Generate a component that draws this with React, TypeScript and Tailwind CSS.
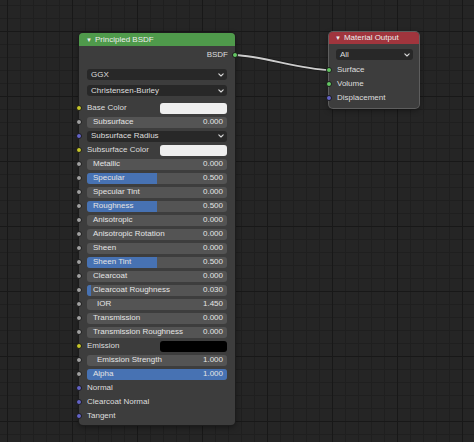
import React from "react";

type Row =
  | { kind: "color"; label: string; socket: string; swatch: string }
  | { kind: "slider"; label: string; socket: string; value: string; fill: number; indent?: boolean }
  | { kind: "dropdown"; label: string; socket: string }
  | { kind: "plain"; label: string; socket: string };

const YEL = "#c7c729";
const GRY = "#a1a1a1";
const PUR = "#6363c7";
const GRN = "#63c763";

const rows: Row[] = [
  { kind: "color", label: "Base Color", socket: YEL, swatch: "#efefef" },
  { kind: "slider", label: "Subsurface", socket: GRY, value: "0.000", fill: 0 },
  { kind: "dropdown", label: "Subsurface Radius", socket: PUR },
  { kind: "color", label: "Subsurface Color", socket: YEL, swatch: "#efefef" },
  { kind: "slider", label: "Metallic", socket: GRY, value: "0.000", fill: 0 },
  { kind: "slider", label: "Specular", socket: GRY, value: "0.500", fill: 0.5 },
  { kind: "slider", label: "Specular Tint", socket: GRY, value: "0.000", fill: 0 },
  { kind: "slider", label: "Roughness", socket: GRY, value: "0.500", fill: 0.5 },
  { kind: "slider", label: "Anisotropic", socket: GRY, value: "0.000", fill: 0 },
  { kind: "slider", label: "Anisotropic Rotation", socket: GRY, value: "0.000", fill: 0 },
  { kind: "slider", label: "Sheen", socket: GRY, value: "0.000", fill: 0 },
  { kind: "slider", label: "Sheen Tint", socket: GRY, value: "0.500", fill: 0.5 },
  { kind: "slider", label: "Clearcoat", socket: GRY, value: "0.000", fill: 0 },
  { kind: "slider", label: "Clearcoat Roughness", socket: GRY, value: "0.030", fill: 0.03 },
  { kind: "slider", label: "IOR", socket: GRY, value: "1.450", fill: 0, indent: true },
  { kind: "slider", label: "Transmission", socket: GRY, value: "0.000", fill: 0 },
  { kind: "slider", label: "Transmission Roughness", socket: GRY, value: "0.000", fill: 0 },
  { kind: "color", label: "Emission", socket: YEL, swatch: "#000000" },
  { kind: "slider", label: "Emission Strength", socket: GRY, value: "1.000", fill: 0, indent: true },
  { kind: "slider", label: "Alpha", socket: GRY, value: "1.000", fill: 1 },
  { kind: "plain", label: "Normal", socket: PUR },
  { kind: "plain", label: "Clearcoat Normal", socket: PUR },
  { kind: "plain", label: "Tangent", socket: PUR },
];

function Socket({ color, side }: { color: string; side: "left" | "right" }) {
  return (
    <span
      className={
        "absolute top-1/2 -translate-y-1/2 w-[6px] h-[6px] rounded-full border border-[#1a1a1a] " +
        (side === "left" ? "left-[-3px]" : "right-[-3px]")
      }
      style={{ backgroundColor: color }}
    />
  );
}

function Chevron() {
  return (
    <svg width="6" height="4" viewBox="0 0 6 4" className="shrink-0">
      <path d="M0.8 0.8 L3 3 L5.2 0.8" fill="none" stroke="#d8d8d8" strokeWidth="1.1" strokeLinecap="round" strokeLinejoin="round" />
    </svg>
  );
}

function Dropdown({ label, className = "" }: { label: string; className?: string }) {
  return (
    <div className={"h-[11px] rounded-[3px] bg-[#282828] flex items-center justify-between pl-[4px] pr-[3px] text-[#dedede] " + className}>
      <span>{label}</span>
      <Chevron />
    </div>
  );
}

function RowView({ row }: { row: Row }) {
  return (
    <div className="relative h-[14px] flex items-center">
      <Socket color={row.socket} side="left" />
      {row.kind === "plain" && <span className="ml-[8px] text-[#dedede]">{row.label}</span>}
      {row.kind === "color" && (
        <div className="ml-[8px] w-[140px] flex items-center justify-between">
          <span className="text-[#dedede]">{row.label}</span>
          <div className="w-[67px] h-[11px] rounded-[3px]" style={{ backgroundColor: row.swatch }} />
        </div>
      )}
      {row.kind === "dropdown" && <Dropdown label={row.label} className="ml-[8px] w-[140px]" />}
      {row.kind === "slider" && (
        <div className="relative ml-[8px] w-[140px] h-[11px] rounded-[3px] bg-[#545454] overflow-hidden">
          {row.fill > 0 && (
            <div className="absolute left-0 top-0 bottom-0 bg-[#4772b3]" style={{ width: `${row.fill * 100}%` }} />
          )}
          <div
            className={
              "relative h-full flex items-center justify-between pr-[4px] text-[#e4e4e4] " +
              (row.indent ? "pl-[10px]" : "pl-[6px]")
            }
          >
            <span>{row.label}</span>
            <span>{row.value}</span>
          </div>
        </div>
      )}
    </div>
  );
}

export default function App() {
  return (
    <div
      className="relative w-[474px] h-[442px] overflow-hidden bg-[#252525] font-['Liberation_Sans',Arial,sans-serif] text-[8px] leading-none [background-image:linear-gradient(to_right,#181818_1px,transparent_1px),linear-gradient(to_bottom,#181818_1px,transparent_1px),linear-gradient(to_right,#1f1f1f_1px,transparent_1px),linear-gradient(to_bottom,#1f1f1f_1px,transparent_1px)] [background-size:65px_65px,65px_65px,13px_13px,13px_13px] [background-position:7px_31px,7px_31px,7px_5px,7px_5px]"
    >
      {/* link */}
      <svg className="absolute left-0 top-0" width="474" height="442">
        <path d="M235 55 C 262 56, 300 69, 329 70" fill="none" stroke="#1a1a1a" strokeWidth="3.5" />
        <path d="M235 55 C 262 56, 300 69, 329 70" fill="none" stroke="#cdcdcd" strokeWidth="1.8" />
      </svg>

      {/* Principled BSDF node */}
      <div className="absolute left-[79px] top-[33px] w-[156px] h-[392px] rounded-[4px] bg-[#3d3d3d] shadow-[0_0_0_1px_#1c1c1c,0_2px_6px_rgba(0,0,0,0.45)] flex flex-col">
        <div className="h-[13px] rounded-t-[4px] bg-[#4f9a4b] flex items-center pl-[7px] gap-[3px] text-[#ececec]">
          <span className="text-[6px]">▼</span>
          <span>Principled BSDF</span>
        </div>
        <div className="flex flex-col pt-[2px]">
          <div className="relative h-[14px] flex items-center justify-end pr-[7px] text-[#dedede]">
            <span>BSDF</span>
            <Socket color={GRN} side="right" />
          </div>
          <Dropdown label="GGX" className="mt-[7px] ml-[8px] w-[140px]" />
          <Dropdown label="Christensen-Burley" className="mt-[5px] ml-[8px] w-[140px]" />
          <div className="mt-[5px] flex flex-col">
            {rows.map((r) => (
              <RowView key={r.label} row={r} />
            ))}
          </div>
        </div>
      </div>

      {/* Material Output node */}
      <div className="absolute left-[329px] top-[32px] w-[90px] h-[76px] rounded-[4px] bg-[#3d3d3d] shadow-[0_0_0_1px_#5e5e5e,0_2px_6px_rgba(0,0,0,0.45)] flex flex-col">
        <div className="h-[12px] rounded-t-[4px] bg-[#a0353d] flex items-center pl-[6px] gap-[3px] text-[#ececec]">
          <span className="text-[6px]">▼</span>
          <span>Material Output</span>
        </div>
        <Dropdown label="All" className="mt-[5px] ml-[7px] w-[77px]" />
        <div className="mt-[3px] flex flex-col">
          {[
            { l: "Surface", c: GRN },
            { l: "Volume", c: GRN },
            { l: "Displacement", c: PUR },
          ].map((s) => (
            <div key={s.l} className="relative h-[14px] flex items-center">
              <Socket color={s.c} side="left" />
              <span className="ml-[8px] text-[#dedede]">{s.l}</span>
            </div>
          ))}
        </div>
      </div>
    </div>
  );
}
